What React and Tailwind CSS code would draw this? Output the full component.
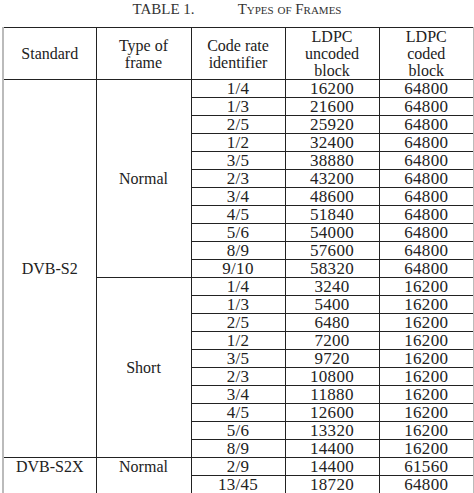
const normal = [
    ['1/4', '16200', '64800'],
    ['1/3', '21600', '64800'],
    ['2/5', '25920', '64800'],
    ['1/2', '32400', '64800'],
    ['3/5', '38880', '64800'],
    ['2/3', '43200', '64800'],
    ['3/4', '48600', '64800'],
    ['4/5', '51840', '64800'],
    ['5/6', '54000', '64800'],
    ['8/9', '57600', '64800'],
    ['9/10', '58320', '64800'],
]

const short = [
    ['1/4', '3240', '16200'],
    ['1/3', '5400', '16200'],
    ['2/5', '6480', '16200'],
    ['1/2', '7200', '16200'],
    ['3/5', '9720', '16200'],
    ['2/3', '10800', '16200'],
    ['3/4', '11880', '16200'],
    ['4/5', '12600', '16200'],
    ['5/6', '13320', '16200'],
    ['8/9', '14400', '16200'],
]

const s2x = [
    ['2/9', '14400', '61560'],
    ['13/45', '18720', '64800'],
]

const cell = 'border border-[#222] h-[18px] p-0 text-center text-[17px] leading-[16px] tracking-[0.3px]'
const spanCell = 'border border-[#222] p-0 text-center align-middle'

function DataCells({ row }) {
    return (
        <>
            <td className={cell}>{row[0]}</td>
            <td className={cell}>{row[1]}</td>
            <td className={`${cell} border-r-[#bbb] border-r-2`}>{row[2]}</td>
        </>
    )
}

export default function App() {
    return (
        <div className="h-[493px] w-[474px] overflow-hidden bg-white text-[#222]" style={{ fontFamily: '"Liberation Serif", "Times New Roman", serif' }}>
            <div className="flex h-[27px] items-start justify-center gap-[43px] pt-[1px] text-[15px] leading-[16px] text-[#333]">
                <span>TABLE 1.</span>
                <span className="[font-variant:small-caps]">Types of Frames</span>
            </div>
            <table className="ml-[2px] w-[471px] table-fixed border-collapse text-[16px]">
                <colgroup>
                    <col className="w-[93px]" />
                    <col className="w-[95px]" />
                    <col className="w-[94px]" />
                    <col className="w-[94px]" />
                    <col className="w-[95px]" />
                </colgroup>
                <thead>
                    <tr className="h-[51px]">
                        <th className="border border-[#222] border-l-2 border-l-[#bbb] p-0 font-normal leading-[17px]">Standard</th>
                        <th className="border border-[#222] p-0 font-normal leading-[17px]">Type of<br />frame</th>
                        <th className="border border-[#222] p-0 font-normal leading-[17px]">Code rate<br />identifier</th>
                        <th className="border border-[#222] p-0 font-normal leading-[17px]">LDPC<br />uncoded<br />block</th>
                        <th className="border border-[#222] border-r-2 border-r-[#bbb] p-0 font-normal leading-[17px]">LDPC<br />coded<br />block</th>
                    </tr>
                </thead>
                <tbody>
                    {normal.map((row, i) => (
                        <tr key={`n${i}`}>
                            {i === 0 && (
                                <>
                                    <td rowSpan={21} className={`${spanCell} border-l-2 border-l-[#bbb]`}>DVB-S2</td>
                                    <td rowSpan={11} className={spanCell}>Normal</td>
                                </>
                            )}
                            <DataCells row={row} />
                        </tr>
                    ))}
                    {short.map((row, i) => (
                        <tr key={`s${i}`}>
                            {i === 0 && <td rowSpan={10} className={spanCell}>Short</td>}
                            <DataCells row={row} />
                        </tr>
                    ))}
                    {s2x.map((row, i) => (
                        <tr key={`x${i}`}>
                            {i === 0 && (
                                <>
                                    <td rowSpan={2} className="border border-[#222] border-l-2 border-l-[#bbb] p-0 pt-px text-center align-top leading-[16px]">DVB-S2X</td>
                                    <td rowSpan={2} className="border border-[#222] p-0 pt-px text-center align-top leading-[16px]">Normal</td>
                                </>
                            )}
                            <DataCells row={row} />
                        </tr>
                    ))}
                </tbody>
            </table>
        </div>
    )
}
